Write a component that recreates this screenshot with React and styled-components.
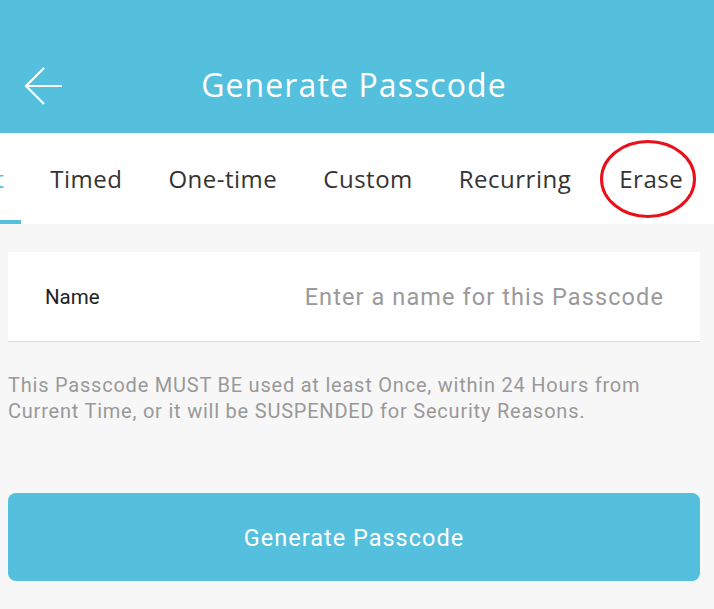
import React from "react";
import styled, { createGlobalStyle } from "styled-components";

const Global = createGlobalStyle`
  html, body {
    margin: 0;
    padding: 0;
    background: #f7f7f7;
  }
  body {
    font-family: Roboto, "Liberation Sans", sans-serif;
  }
`;

const Page = styled.div`
  width: 714px;
  height: 609px;
  overflow: hidden;
  background: #f7f7f7;
  display: flex;
  flex-direction: column;
`;

const Header = styled.header`
  height: 133px;
  background: #54c0de;
  display: flex;
  align-items: center;
  padding-top: 36px;
  box-sizing: border-box;
`;

const BackButton = styled.button`
  width: 40px;
  height: 40px;
  margin: 2px 0 0 24px;
  padding: 0;
  border: 0;
  background: none;
  display: flex;
  align-items: center;
  justify-content: center;
`;

const Title = styled.h1`
  flex: 1;
  margin: 0 0 0 -70px;
  text-align: center;
  color: #fff;
  font-family: "Open Sans", sans-serif;
  font-weight: 500;
  font-size: 32px;
  letter-spacing: 1.1px;
`;

const TabStrip = styled.nav`
  height: 91px;
  background: #fff;
  overflow: hidden;
  display: flex;
  align-items: stretch;
`;

const Tab = styled.div`
  position: relative;
  flex: none;
  display: flex;
  align-items: center;
  padding: 0 23px;
  font-family: "Open Sans", sans-serif;
  font-size: 24px;
  letter-spacing: 0.5px;
  color: ${(p) => (p.$active ? "#54c0de" : "#333")};
  white-space: nowrap;

  &:first-child {
    margin-left: ${(p) => p.$offset || 0}px;
  }

  &:last-child {
    padding-left: 25px;
  }

  &::after {
    content: "";
    display: ${(p) => (p.$active ? "block" : "none")};
    position: absolute;
    left: 0;
    right: 6px;
    bottom: 0;
    height: 4px;
    background: #54c0de;
  }
`;

const Circle = styled.svg`
  position: absolute;
  left: 5px;
  top: 6px;
  width: 98px;
  height: 80px;
  pointer-events: none;
`;

const Body = styled.main`
  padding: 28px 14px 0 8px;
  display: flex;
  flex-direction: column;
`;

const Field = styled.label`
  height: 90px;
  background: #fff;
  border-bottom: 1px solid #dcdcdc;
  box-sizing: border-box;
  display: flex;
  align-items: center;
  justify-content: space-between;
  padding: 0 36px 0 37px;
`;

const FieldLabel = styled.span`
  font-size: 20.5px;
  color: #222;
`;

const FieldInput = styled.input`
  border: 0;
  outline: none;
  background: none;
  text-align: right;
  width: 440px;
  padding: 0;
  font-family: Roboto, sans-serif;
  font-size: 23.5px;
  letter-spacing: 1.1px;
  color: #222;

  &::placeholder {
    color: #9a9a9a;
  }
`;

const Note = styled.p`
  margin: 30px 0 0;
  font-size: 20px;
  letter-spacing: 0.78px;
  line-height: 26px;
  color: #999;
`;

const PrimaryButton = styled.button`
  margin-top: 69px;
  height: 88px;
  border: 0;
  border-radius: 8px;
  background: #54c0de;
  color: #fff;
  font-family: Roboto, sans-serif;
  font-size: 23.5px;
  letter-spacing: 1px;
  padding-top: 2px;
`;

const tabs = ["Permanent", "Timed", "One-time", "Custom", "Recurring", "Erase"];

export default function App() {
  return (
    <>
      <Global />
      <Page>
        <Header>
          <BackButton aria-label="Back">
            <svg width="40" height="40" viewBox="0 0 40 40">
              <path
                d="M20 2 L2 20 L20 38 M2 20 H38"
                fill="none"
                stroke="#fff"
                strokeWidth="2.2"
              />
            </svg>
          </BackButton>
          <Title>Generate Passcode</Title>
        </Header>
        <TabStrip>
          {tabs.map((t, i) => (
            <Tab key={t} $active={i === 0} $offset={-148}>
              {t}
              {t === "Erase" && (
                <Circle viewBox="0 0 98 80">
                  <ellipse
                    cx="49"
                    cy="40"
                    rx="46.5"
                    ry="37.5"
                    fill="none"
                    stroke="#e8111b"
                    strokeWidth="3"
                  />
                </Circle>
              )}
            </Tab>
          ))}
        </TabStrip>
        <Body>
          <Field>
            <FieldLabel>Name</FieldLabel>
            <FieldInput placeholder="Enter a name for this Passcode" />
          </Field>
          <Note>
            This Passcode MUST BE used at least Once, within 24 Hours from
            <br />
            Current Time, or it will be SUSPENDED for Security Reasons.
          </Note>
          <PrimaryButton>Generate Passcode</PrimaryButton>
        </Body>
      </Page>
    </>
  );
}
